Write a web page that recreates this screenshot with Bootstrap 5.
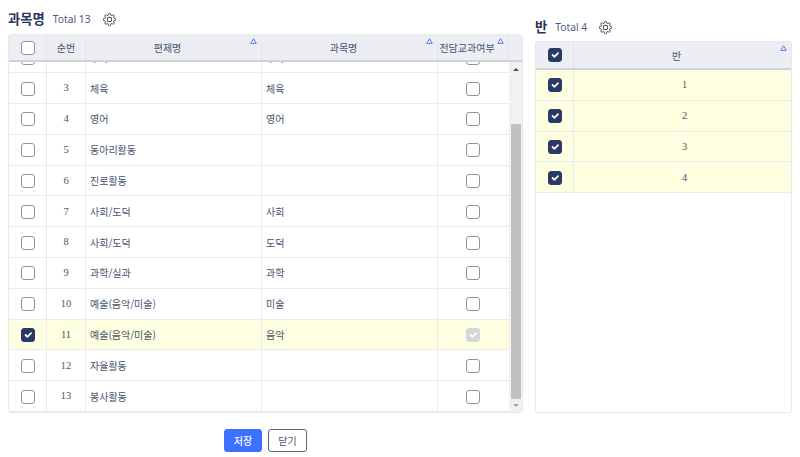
<!DOCTYPE html>
<html lang="ko">
<head>
<meta charset="utf-8">
<title>과목명</title>
<link href="https://cdn.jsdelivr.net/npm/bootstrap@5.3.0/dist/css/bootstrap.min.css" rel="stylesheet">
<style>
html,body{height:100%;overflow:hidden}
body{background:#fff;color:#46536f;font-family:"Noto Sans CJK KR","Noto Sans",sans-serif;font-size:10px}
.page-wrap{padding:8px 8px 0;gap:12px;height:457px}
.left-pane{width:515px;flex:none}
.right-pane{width:257px;flex:none;padding-top:7px}
.title-bar{height:26px;gap:8px;padding-bottom:5px}
.right-pane .title-bar{height:26px;padding-bottom:4px}
.title-main{font-size:13.3px;font-weight:700;color:#28345a;line-height:20px}
.title-total{font-family:"Noto Sans","Noto Sans CJK KR",sans-serif;font-size:10.3px;color:#4c5a78;line-height:20px}
.gear-icon{width:13px;height:13px;margin:0 0 3px 4px;color:#444}
.grid-box{border:1px solid #e6e8eb;border-radius:3px;overflow:hidden;background:#fff}
.left-pane .grid-box{height:379px}
.right-pane .grid-box{height:372px}
.grid-tbl{table-layout:fixed;border-collapse:separate;border-spacing:0;margin:0;width:100%}
.grid-head{background:#eceef4;height:28px;border-bottom:2px solid #cfd2d9;flex:none}
.left-pane .grid-head{height:27px}
.grid-head .grid-tbl{height:26px}
.left-pane .grid-head .grid-tbl{height:25px}
.grid-head th{font-weight:400;text-align:center;border-right:1px solid #e2e4ea;padding:0;position:relative;color:#46536f;font-size:10px;white-space:nowrap}
.grid-head th:last-child{border-right:0}
.grid-head th.sortable{padding-right:12px}
.grid-head th.tick-cell{padding-left:1px}
.sort-mark{position:absolute;top:3px;right:4px;width:7px;height:6px}
.grid-main{height:351px;overflow:hidden}
.rows-view{flex:1 1 auto;min-width:0;overflow:hidden}
.rows-view .grid-tbl{margin-top:-19.5px}
.fake-bar{width:13px;flex:none;background:#f1f1f1;padding:0 1px 0 2px}
.bar-up,.bar-down{display:block;width:6px;height:3px;margin-inline:auto}
.bar-up{margin-top:6px;margin-bottom:53px}
.bar-thumb{height:275px;background:#c1c1c1}
.bar-down{margin-top:5px}
.grid-body td{height:30.8px;padding:1px 5px 0 4px;border-right:1px solid #eaebee;border-bottom:1px solid #eaebee;vertical-align:middle;color:#46536f;font-size:10px;line-height:1;overflow:hidden;white-space:nowrap}
.grid-body td:last-child{border-right:0;padding-right:1px}
.grid-body .num-cell{font-family:"Liberation Serif",serif;font-size:10.5px;text-align:center;color:#4a5670;padding-left:5px}
.grid-body .mid-cell{text-align:center;padding-left:0}
.grid-body .tick-cell{padding:1px 0 0 1px}
.grid-body tr.picked td{background:#fefee0}
.tick{width:14px;height:14px;margin:0;display:block;margin-inline:auto;border:1px solid #8f949f;border-radius:3px!important;float:none;box-shadow:none}
.tick:checked{background-color:#2a3a66;border-color:#2a3a66}
.tick:disabled{opacity:1}
.tick:checked:disabled{background-color:#d6d7da;border-color:#d6d7da}
.actions{gap:6px;padding-top:16px}
.btn-save,.btn-close-x{font-size:10px;height:23px;width:38px;padding:0;border-radius:3px;line-height:1}
.btn-save{background:#3b71fe;border-color:#3b71fe;color:#fff;font-weight:500}
.btn-close-x{width:39px;background:#fff;border:1px solid #57657f;color:#46536f}
</style>
</head>
<body>
<div class="d-flex page-wrap">
  <section class="left-pane">
    <div class="d-flex align-items-end title-bar">
      <span class="title-main">과목명</span>
      <span class="title-total">Total 13</span>
      <svg class="gear-icon" viewBox="0 0 16 16" fill="currentColor"><path d="M8 4.754a3.246 3.246 0 1 0 0 6.492 3.246 3.246 0 0 0 0-6.492zM5.754 8a2.246 2.246 0 1 1 4.492 0 2.246 2.246 0 0 1-4.492 0z"/><path d="M9.796 1.343c-.527-1.79-3.065-1.79-3.592 0l-.094.319a.873.873 0 0 1-1.255.52l-.292-.16c-1.64-.892-3.433.902-2.54 2.541l.159.292a.873.873 0 0 1-.52 1.255l-.319.094c-1.79.527-1.79 3.065 0 3.592l.319.094a.873.873 0 0 1 .52 1.255l-.16.292c-.892 1.64.901 3.434 2.541 2.54l.292-.159a.873.873 0 0 1 1.255.52l.094.319c.527 1.79 3.065 1.79 3.592 0l.094-.319a.873.873 0 0 1 1.255-.52l.292.16c1.64.893 3.434-.902 2.54-2.541l-.159-.292a.873.873 0 0 1 .52-1.255l.319-.094c1.79-.527 1.79-3.065 0-3.592l-.319-.094a.873.873 0 0 1-.52-1.255l.16-.292c.893-1.64-.902-3.433-2.541-2.54l-.292.159a.873.873 0 0 1-1.255-.52l-.094-.319zm-2.633.283c.246-.835 1.428-.835 1.674 0l.094.319a1.873 1.873 0 0 0 2.693 1.115l.291-.16c.764-.415 1.6.42 1.184 1.185l-.159.292a1.873 1.873 0 0 0 1.116 2.692l.318.094c.835.246.835 1.428 0 1.674l-.319.094a1.873 1.873 0 0 0-1.115 2.693l.16.291c.415.764-.42 1.6-1.185 1.184l-.291-.159a1.873 1.873 0 0 0-2.693 1.116l-.094.318c-.246.835-1.428.835-1.674 0l-.094-.319a1.873 1.873 0 0 0-2.692-1.115l-.292.16c-.764.415-1.6-.42-1.184-1.185l.159-.291A1.873 1.873 0 0 0 1.945 8.93l-.319-.094c-.835-.246-.835-1.428 0-1.674l.319-.094A1.873 1.873 0 0 0 3.06 4.377l-.16-.292c-.415-.764.42-1.6 1.185-1.184l.292.159a1.873 1.873 0 0 0 2.692-1.115l.094-.319z"/></svg>
    </div>
    <div class="grid-box d-flex flex-column">
      <div class="grid-head">
        <table class="grid-tbl">
          <colgroup><col style="width:38px"><col style="width:39px"><col style="width:176px"><col style="width:176px"><col style="width:71px"><col style="width:13px"></colgroup>
          <thead><tr>
            <th class="tick-cell"><input class="form-check-input tick" type="checkbox" aria-label="전체"></th>
            <th>순번</th>
            <th class="sortable">편제명<svg class="sort-mark" viewBox="0 0 7 6"><path d="M3.5 .8L6.3 5.4H.7z" fill="none" stroke="#5b7cf0"/></svg></th>
            <th class="sortable">과목명<svg class="sort-mark" viewBox="0 0 7 6"><path d="M3.5 .8L6.3 5.4H.7z" fill="none" stroke="#5b7cf0"/></svg></th>
            <th class="sortable">전담교과여부<svg class="sort-mark" viewBox="0 0 7 6"><path d="M3.5 .8L6.3 5.4H.7z" fill="none" stroke="#5b7cf0"/></svg></th>
            <th></th>
          </tr></thead>
        </table>
      </div>
      <div class="d-flex grid-main">
        <div class="rows-view">
          <table class="grid-tbl grid-body">
            <colgroup><col style="width:38px"><col style="width:39px"><col style="width:176px"><col style="width:176px"><col></colgroup>
            <tbody id="leftRows"></tbody>
          </table>
        </div>
        <div class="fake-bar">
          <svg class="bar-up" viewBox="0 0 6 3"><path d="M3 0L6 3H0z" fill="#505050"/></svg>
          <div class="bar-thumb"></div>
          <svg class="bar-down" viewBox="0 0 6 3"><path d="M0 0h6L3 3z" fill="#a3a3a3"/></svg>
        </div>
      </div>
    </div>
    <div class="d-flex justify-content-center actions">
      <button type="button" class="btn btn-primary btn-save">저장</button>
      <button type="button" class="btn btn-close-x">닫기</button>
    </div>
  </section>
  <section class="right-pane">
    <div class="d-flex align-items-end title-bar">
      <span class="title-main">반</span>
      <span class="title-total">Total 4</span>
      <svg class="gear-icon" viewBox="0 0 16 16" fill="currentColor"><path d="M8 4.754a3.246 3.246 0 1 0 0 6.492 3.246 3.246 0 0 0 0-6.492zM5.754 8a2.246 2.246 0 1 1 4.492 0 2.246 2.246 0 0 1-4.492 0z"/><path d="M9.796 1.343c-.527-1.79-3.065-1.79-3.592 0l-.094.319a.873.873 0 0 1-1.255.52l-.292-.16c-1.64-.892-3.433.902-2.54 2.541l.159.292a.873.873 0 0 1-.52 1.255l-.319.094c-1.79.527-1.79 3.065 0 3.592l.319.094a.873.873 0 0 1 .52 1.255l-.16.292c-.892 1.64.901 3.434 2.541 2.54l.292-.159a.873.873 0 0 1 1.255.52l.094.319c.527 1.79 3.065 1.79 3.592 0l.094-.319a.873.873 0 0 1 1.255-.52l.292.16c1.64.893 3.434-.902 2.54-2.541l-.159-.292a.873.873 0 0 1 .52-1.255l.319-.094c1.79-.527 1.79-3.065 0-3.592l-.319-.094a.873.873 0 0 1-.52-1.255l.16-.292c.893-1.64-.902-3.433-2.541-2.54l-.292.159a.873.873 0 0 1-1.255-.52l-.094-.319zm-2.633.283c.246-.835 1.428-.835 1.674 0l.094.319a1.873 1.873 0 0 0 2.693 1.115l.291-.16c.764-.415 1.6.42 1.184 1.185l-.159.292a1.873 1.873 0 0 0 1.116 2.692l.318.094c.835.246.835 1.428 0 1.674l-.319.094a1.873 1.873 0 0 0-1.115 2.693l.16.291c.415.764-.42 1.6-1.185 1.184l-.291-.159a1.873 1.873 0 0 0-2.693 1.116l-.094.318c-.246.835-1.428.835-1.674 0l-.094-.319a1.873 1.873 0 0 0-2.692-1.115l-.292.16c-.764.415-1.6-.42-1.184-1.185l.159-.291A1.873 1.873 0 0 0 1.945 8.93l-.319-.094c-.835-.246-.835-1.428 0-1.674l.319-.094A1.873 1.873 0 0 0 3.06 4.377l-.16-.292c-.415-.764.42-1.6 1.185-1.184l.292.159a1.873 1.873 0 0 0 2.692-1.115l.094-.319z"/></svg>
    </div>
    <div class="grid-box">
      <div class="grid-head">
        <table class="grid-tbl">
          <colgroup><col style="width:38px"><col></colgroup>
          <thead><tr>
            <th class="tick-cell"><input class="form-check-input tick" type="checkbox" checked aria-label="전체"></th>
            <th class="sortable">반<svg class="sort-mark" viewBox="0 0 7 6"><path d="M3.5 .8L6.3 5.4H.7z" fill="none" stroke="#5b7cf0"/></svg></th>
          </tr></thead>
        </table>
      </div>
      <table class="grid-tbl grid-body">
        <colgroup><col style="width:38px"><col></colgroup>
        <tbody id="rightRows"></tbody>
      </table>
    </div>
  </section>
</div>
<script src="https://cdn.jsdelivr.net/npm/bootstrap@5.3.0/dist/js/bootstrap.bundle.min.js"></script>
<script>
var rows=[[2,"수학","수학"],[3,"체육","체육"],[4,"영어","영어"],[5,"동아리활동",""],[6,"진로활동",""],[7,"사회/도덕","사회"],[8,"사회/도덕","도덕"],[9,"과학/실과","과학"],[10,"예술(음악/미술)","미술"],[11,"예술(음악/미술)","음악",1],[12,"자율활동",""],[13,"봉사활동",""]];
document.getElementById('leftRows').innerHTML=rows.map(function(r){var on=r[3];return '<tr class="'+(on?'picked':'')+'"><td class="mid-cell tick-cell"><input class="form-check-input tick" type="checkbox" '+(on?'checked':'')+'></td><td class="num-cell">'+r[0]+'</td><td>'+r[1]+'</td><td>'+r[2]+'</td><td class="mid-cell"><input class="form-check-input tick" type="checkbox" '+(on?'checked disabled':'')+'></td></tr>';}).join('');
document.getElementById('rightRows').innerHTML=[1,2,3,4].map(function(n){return '<tr class="picked"><td class="mid-cell tick-cell"><input class="form-check-input tick" type="checkbox" checked></td><td class="num-cell">'+n+'</td></tr>';}).join('');
</script>
</body>
</html>
